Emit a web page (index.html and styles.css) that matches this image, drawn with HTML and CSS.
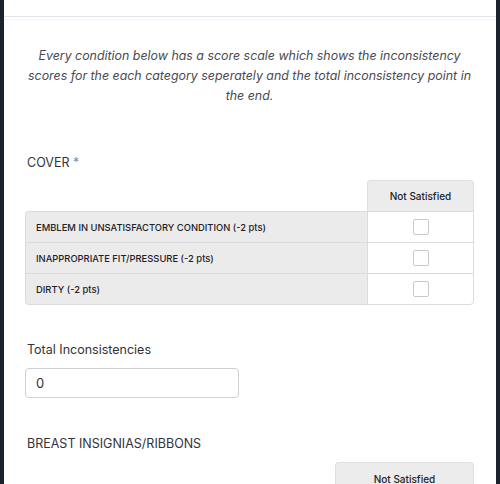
FILE: index.html
```html
<!DOCTYPE html>
<html>
<head>
<meta charset="utf-8">
<link rel="stylesheet" href="styles.css">
</head>
<body>
<div class="card">
  <div class="topbar"></div>
  <div class="content">
    <p class="intro">Every condition below has a score scale which shows the inconsistency scores for the each category seperately and the total inconsistency point in the end.</p>

    <div class="section">
      <div class="label">COVER <span class="req">*</span></div>
      <div class="matrix">
        <div class="blank"></div>
        <div class="head">Not Satisfied</div>
        <div class="row-label first">EMBLEM IN UNSATISFACTORY CONDITION (-2 pts)</div>
        <div class="cell"><span class="box"></span></div>
        <div class="row-label">INAPPROPRIATE FIT/PRESSURE (-2 pts)</div>
        <div class="cell"><span class="box"></span></div>
        <div class="row-label last">DIRTY (-2 pts)</div>
        <div class="cell lastcell"><span class="box"></span></div>
      </div>
    </div>

    <div class="section total">
      <div class="label medium">Total Inconsistencies</div>
      <div class="input">0</div>
    </div>

    <div class="section breast">
      <div class="label">BREAST INSIGNIAS/RIBBONS</div>
      <div class="matrix matrix2">
        <div class="blank"></div>
        <div class="head">Not Satisfied</div>
      </div>
    </div>
  </div>
</div>
</body>
</html>
```
FILE: styles.css
```css
html, body {
  margin: 0;
  padding: 0;
  background: #1b222c;
  height: 100%;
}
body {
  font-family: Inter, "Noto Sans", sans-serif;
  color: #2b2b30;
  overflow: hidden;
}
.card {
  margin: 0 4px;
  background: #ffffff;
  min-height: 484px;
}
.topbar {
  height: 16px;
  border-bottom: 1px solid #e2e3ea;
  position: relative;
}
.topbar::after {
  content: "";
  position: absolute;
  left: 0;
  right: 0;
  top: 19px;
  border-top: 1px dotted #eceef2;
}
.content {
  padding: 29px 22px 0 21px;
}
.intro {
  margin: 0;
  text-align: center;
  font-style: italic;
  font-size: 12.4px;
  line-height: 20px;
  color: #4a4a52;
}
.section {
  margin-top: 49px;
}
.label {
  font-size: 12.5px;
  line-height: 16px;
  color: #333338;
  padding-left: 2px;
}
.label .req {
  color: #8a8a90;
}
.label.medium {
  font-size: 12.5px;
}
.matrix {
  margin-top: 9px;
  display: grid;
  grid-template-columns: 342px 107px;
  font-size: 9.4px;
  font-weight: 500;
  color: #222226;
}
.head {
  height: 30px;
  display: flex;
  align-items: center;
  justify-content: center;
  background: #ececed;
  border: 1px solid #dedee2;
  border-bottom: none;
  border-radius: 4px 4px 0 0;
  font-size: 10px;
  font-weight: 500;
}
.row-label {
  height: 30px;
  display: flex;
  align-items: center;
  padding-left: 10px;
  background: #ebebec;
  border-top: 1px solid #dcdce0;
  border-left: 1px solid #dcdce0;
}
.row-label.first {
  border-top-left-radius: 4px;
}
.row-label.last {
  border-bottom: 1px solid #dcdce0;
  border-bottom-left-radius: 4px;
}
.cell {
  height: 30px;
  display: flex;
  align-items: center;
  justify-content: center;
  border-top: 1px solid #dcdce0;
  border-left: 1px solid #dcdce0;
  border-right: 1px solid #dcdce0;
}
.cell.lastcell {
  border-bottom: 1px solid #dcdce0;
  border-bottom-right-radius: 4px;
}
.box {
  width: 14px;
  height: 14px;
  border: 1px solid #c9c9ce;
  border-radius: 2px;
  background: #fff;
}
.total {
  margin-top: 37px;
}
.input {
  margin-top: 10px;
  width: 202px;
  height: 28px;
  border: 1px solid #cfd0d6;
  border-radius: 4px;
  display: flex;
  align-items: center;
  padding-left: 10px;
  font-size: 13px;
  color: #333;
}
.breast {
  margin-top: 38px;
}
.matrix2 {
  margin-top: 10px;
  grid-template-columns: 310px 139px;
}
.matrix2 .head {
  height: 31px;
}
```
